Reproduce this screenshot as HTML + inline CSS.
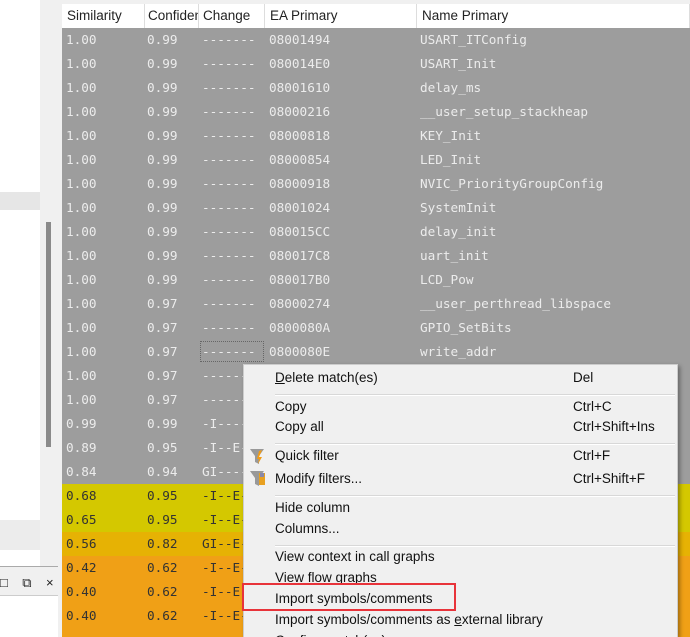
<!DOCTYPE html><html style="overflow:hidden;height:637px"><head><style>
body{margin:0;width:690px;height:637px;overflow:hidden;background:#f0f0f0;position:relative;font-family:"Liberation Sans",sans-serif}
.a{position:absolute}
.hd{position:absolute;top:4px;height:24px;background:#fff;font-size:13.5px;color:#222;line-height:24px;border-right:1px solid #ddd;white-space:nowrap}
.row{position:absolute;left:62px;width:628px;height:24px;font-family:"DejaVu Sans Mono","Liberation Mono",monospace;font-size:12.7px;line-height:24px}
.row span{position:absolute;top:0}
.g{background:#9d9d9d;color:#ececec}
.y{background:#d4c800;color:#333}
.y2{background:#e6b204;color:#333}
.o{background:#f0a016;color:#333}
.menu{position:absolute;left:243px;top:364px;width:433px;height:280px;background:#f0f0f0;border:1px solid #ccc;box-shadow:2px 2px 4px rgba(0,0,0,.35);font-size:13.5px;color:#111}
.mi{position:absolute;left:31px;height:20px;line-height:20px}
.sc{position:absolute;left:329px;height:20px;line-height:20px}
.sep{position:absolute;left:31px;width:400px;height:1px;background:#d8d8d8;border-bottom:1px solid #fff}
</style></head><body>
<div class="a" style="left:0;top:0;width:40px;height:567px;background:#fff"></div>
<div class="a" style="left:0;top:192px;width:40px;height:18px;background:#e6e6e6"></div>
<div class="a" style="left:0;top:520px;width:40px;height:30px;background:#ececec"></div>
<div class="a" style="left:46px;top:222px;width:5px;height:225px;background:#8a8a8a"></div>
<div class="a" style="left:0;top:566px;width:58px;height:1px;background:#aaa"></div>
<div class="a" style="left:0;top:575px;font-size:13px;color:#222">□&nbsp;&nbsp;&nbsp;&nbsp;⧉&nbsp;&nbsp;&nbsp;&nbsp;×</div>
<div class="a" style="left:0;top:595px;width:58px;height:42px;background:#fff;border-top:1px solid #ccc"></div>
<div class="a" style="left:62px;top:0;width:628px;height:4px;background:#f0f0f0"></div>
<div class="hd" style="left:62px;width:83px;padding-left:5px;box-sizing:border-box">Similarity</div>
<div class="hd" style="left:145px;width:54px;padding-left:3px;box-sizing:border-box;overflow:hidden">Confidence</div>
<div class="hd" style="left:199px;width:66px;padding-left:4px;box-sizing:border-box">Change</div>
<div class="hd" style="left:265px;width:152px;padding-left:5px;box-sizing:border-box">EA Primary</div>
<div class="hd" style="left:417px;width:273px;padding-left:5px;box-sizing:border-box">Name Primary</div>
<div id="rows"></div>
<script>
var d=[["1.00","0.99","-------","08001494","USART_ITConfig","g"],["1.00","0.99","-------","080014E0","USART_Init","g"],["1.00","0.99","-------","08001610","delay_ms","g"],["1.00","0.99","-------","08000216","__user_setup_stackheap","g"],["1.00","0.99","-------","08000818","KEY_Init","g"],["1.00","0.99","-------","08000854","LED_Init","g"],["1.00","0.99","-------","08000918","NVIC_PriorityGroupConfig","g"],["1.00","0.99","-------","08001024","SystemInit","g"],["1.00","0.99","-------","080015CC","delay_init","g"],["1.00","0.99","-------","080017C8","uart_init","g"],["1.00","0.99","-------","080017B0","LCD_Pow","g"],["1.00","0.97","-------","08000274","__user_perthread_libspace","g"],["1.00","0.97","-------","0800080A","GPIO_SetBits","g"],["1.00","0.97","-------","0800080E","write_addr","g"],["1.00","0.97","-------","","","g"],["1.00","0.97","-------","","","g"],["0.99","0.99","-I-----","","","g"],["0.89","0.95","-I--E--","","","g"],["0.84","0.94","GI-----","","","g"],["0.68","0.95","-I--E--","","","y"],["0.65","0.95","-I--E--","","","y"],["0.56","0.82","GI--E--","","","y2"],["0.42","0.62","-I--E--","","","o"],["0.40","0.62","-I--E--","","","o"],["0.40","0.62","-I--E--","","","o"]];
var h="";d.forEach(function(r,i){h+='<div class="row '+r[5]+'" style="top:'+(28+24*i)+'px"><span style="left:4px">'+r[0]+'</span><span style="left:85px">'+r[1]+'</span><span style="left:140px">'+r[2]+'</span><span style="left:207px">'+r[3]+'</span><span style="left:358px">'+r[4]+'</span></div>';});
document.getElementById("rows").innerHTML=h;
</script>
<div class="a" style="left:62px;top:628px;width:628px;height:9px;background:#f0a016"></div>
<div class="a" style="left:200px;top:341px;width:64px;height:21px;border:1px dotted #666;box-sizing:border-box"></div>
<div class="menu" style="height:272px;border-bottom:none">
<div class="mi" style="top:3px"><u>D</u>elete match(es)</div><div class="sc" style="top:3px">Del</div>
<div class="sep" style="top:29px"></div>
<div class="mi" style="top:32px">Copy</div><div class="sc" style="top:32px">Ctrl+C</div>
<div class="mi" style="top:52px">Copy all</div><div class="sc" style="top:52px">Ctrl+Shift+Ins</div>
<div class="sep" style="top:78px"></div>
<svg class="a" style="left:5px;top:83px" width="18" height="40"><path d="M1 1h14l-5 7v8l-4-2V8z" fill="#999"/><path d="M10 3l3-1-3 7h3l-4 7 1-5H8z" fill="#f39c12"/><path d="M1 23h14l-5 7v8l-4-2v-6z" fill="#999"/><rect x="10" y="25" width="6" height="12" fill="#e8a020"/><rect x="11" y="25" width="4" height="4" fill="#88a"/></svg>
<div class="mi" style="top:81px">Quick filter</div><div class="sc" style="top:81px">Ctrl+F</div>
<div class="mi" style="top:104px">Modify filters...</div><div class="sc" style="top:104px">Ctrl+Shift+F</div>
<div class="sep" style="top:130px"></div>
<div class="mi" style="top:133px">Hide column</div>
<div class="mi" style="top:154px">Columns...</div>
<div class="sep" style="top:180px"></div>
<div class="mi" style="top:182px">View context in call graphs</div>
<div class="mi" style="top:203px">View flow graphs</div>
<div class="mi" style="top:224px">Import symbols/comments</div>
<div class="mi" style="top:245px">Import symbols/comments as <u>e</u>xternal library</div>
<div class="mi" style="top:266px;height:6px;overflow:hidden">Confirm match(es)</div>
</div>
<div class="a" style="left:242px;top:583px;width:214px;height:28px;border:2px solid #e8333a;box-sizing:border-box"></div>
</body></html>
